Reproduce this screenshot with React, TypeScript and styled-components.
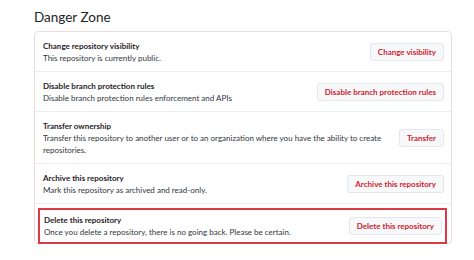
import * as React from "react";
import styled, { createGlobalStyle } from "styled-components";

const GlobalStyle = createGlobalStyle`
  html, body {
    margin: 0;
    padding: 0;
    background: #ffffff;
  }
  body {
    font-family: Lato, "Open Sans", "Liberation Sans", sans-serif;
    color: #1f2328;
  }
`;

const Page = styled.div`
  width: 474px;
  height: 260px;
  padding: 8px 0 0 34px;
  box-sizing: border-box;
`;

const Heading = styled.h2`
  margin: 0 0 5px;
  font-size: 13.5px;
  font-weight: 400;
  line-height: 18px;
  color: #1f2328;
`;

const Box = styled.div`
  width: 418px;
  box-sizing: border-box;
  border: 1px solid #f2d9da;
  border-radius: 4px;
`;

const Row = styled.div<{ $highlight?: boolean }>`
  display: flex;
  align-items: center;
  justify-content: space-between;
  gap: 12px;
  padding: 8px 7px 7px 8px;
  border-top: 1px solid #ebedf0;
  &:first-child {
    border-top: none;
  }
  ${(p) =>
    p.$highlight &&
    `
    margin: 4px 4px -1px 3px;
    padding: 4px 3px 4px 4px;
    border: 2px solid #dc3b45;
    &:first-child { border-top: 2px solid #dc3b45; }
  `}
`;

const HighlightWrap = styled.div`
  border-top: 1px solid #ebedf0;
`;

const Info = styled.div`
  display: flex;
  flex-direction: column;
`;

const Title = styled.strong`
  font-size: 8px;
  font-weight: 700;
  line-height: 12px;
  color: #1f2328;
`;

const Desc = styled.p`
  margin: 0;
  font-size: 8px;
  line-height: 12px;
  color: #31363c;
  max-width: 345px;
`;

const DangerButton = styled.button`
  flex-shrink: 0;
  height: 18px;
  padding: 0 7px;
  font-family: inherit;
  font-size: 8px;
  font-weight: 700;
  color: #cf222e;
  background: #f6f8fa;
  border: 1px solid #e4e7eb;
  border-radius: 3px;
`;

interface Setting {
  title: string;
  desc: string;
  action: string;
}

const settings: Setting[] = [
  {
    title: "Change repository visibility",
    desc: "This repository is currently public.",
    action: "Change visibility",
  },
  {
    title: "Disable branch protection rules",
    desc: "Disable branch protection rules enforcement and APIs",
    action: "Disable branch protection rules",
  },
  {
    title: "Transfer ownership",
    desc: "Transfer this repository to another user or to an organization where you have the ability to create repositories.",
    action: "Transfer",
  },
  {
    title: "Archive this repository",
    desc: "Mark this repository as archived and read-only.",
    action: "Archive this repository",
  },
];

const SettingRow = ({ s, highlight }: { s: Setting; highlight?: boolean }) => (
  <Row $highlight={highlight}>
    <Info>
      <Title>{s.title}</Title>
      <Desc>{s.desc}</Desc>
    </Info>
    <DangerButton>{s.action}</DangerButton>
  </Row>
);

const App = () => {
  return (
    <Page>
      <GlobalStyle />
      <Heading>Danger Zone</Heading>
      <Box>
        {settings.map((s, i) => (
          <SettingRow key={i} s={s} />
        ))}
        <HighlightWrap>
          <SettingRow
            highlight
            s={{
              title: "Delete this repository",
              desc: "Once you delete a repository, there is no going back. Please be certain.",
              action: "Delete this repository",
            }}
          />
        </HighlightWrap>
      </Box>
    </Page>
  );
};

export default App;
